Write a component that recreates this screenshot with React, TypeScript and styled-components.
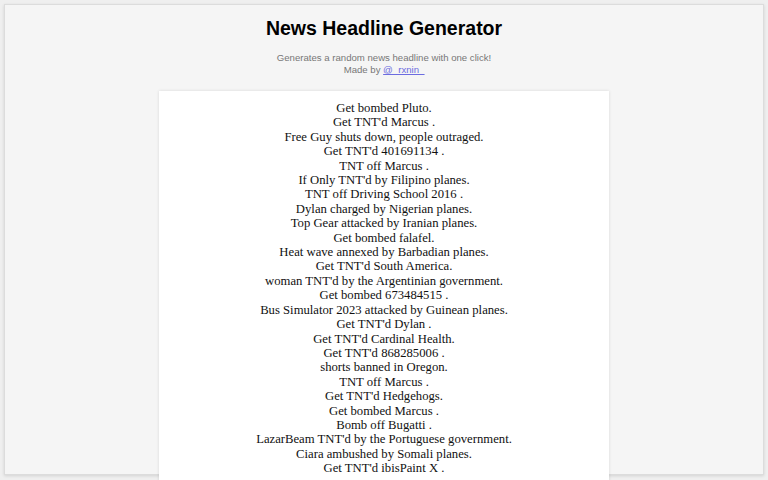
import styled, { createGlobalStyle } from "styled-components";

const GlobalStyle = createGlobalStyle`
  html, body {
    margin: 0;
    padding: 0;
    height: 100%;
    overflow: hidden;
    background: #efefef;
  }
`;

const Page = styled.div`
  margin: 4px;
  height: 469px;
  border: 1px solid #dcdcdc;
  background: #f5f5f5;
  box-shadow: 0 1px 3px rgba(0, 0, 0, 0.12);
  display: flex;
  flex-direction: column;
  align-items: center;
  font-family: "Liberation Sans", Arial, sans-serif;
`;

const Title = styled.h1`
  margin: 12px 0 0;
  font-size: 19.5px;
  line-height: 22px;
  font-weight: bold;
  color: #000;
`;

const Subtitle = styled.div`
  margin-top: 13px;
  font-size: 9.6px;
  line-height: 12px;
  color: #777;
  text-align: center;
`;

const Link = styled.a`
  color: #6c6ce0;
  text-decoration: underline;
`;

const Headlines = styled.div`
  margin-top: 15px;
  width: 450px;
  flex: 0 0 auto;
  min-height: 390px;
  padding: 10px 0 0;
  background: #fff;
  box-shadow: 0 0 3px rgba(0, 0, 0, 0.12);
  font-family: "Liberation Serif", "Times New Roman", serif;
  font-size: 12.7px;
  line-height: 14.4px;
  color: #111;
  text-align: center;
`;

const Headline = styled.div``;

const headlines = [
  "Get bombed Pluto.",
  "Get TNT'd Marcus .",
  "Free Guy shuts down, people outraged.",
  "Get TNT'd 401691134 .",
  "TNT off Marcus .",
  "If Only TNT'd by Filipino planes.",
  "TNT off Driving School 2016 .",
  "Dylan charged by Nigerian planes.",
  "Top Gear attacked by Iranian planes.",
  "Get bombed falafel.",
  "Heat wave annexed by Barbadian planes.",
  "Get TNT'd South America.",
  "woman TNT'd by the Argentinian government.",
  "Get bombed 673484515 .",
  "Bus Simulator 2023 attacked by Guinean planes.",
  "Get TNT'd Dylan .",
  "Get TNT'd Cardinal Health.",
  "Get TNT'd 868285006 .",
  "shorts banned in Oregon.",
  "TNT off Marcus .",
  "Get TNT'd Hedgehogs.",
  "Get bombed Marcus .",
  "Bomb off Bugatti .",
  "LazarBeam TNT'd by the Portuguese government.",
  "Ciara ambushed by Somali planes.",
  "Get TNT'd ibisPaint X .",
];

const App = () => {
  return (
    <>
      <GlobalStyle />
      <Page>
        <Title>News Headline Generator</Title>
        <Subtitle>
          Generates a random news headline with one click!
          <br />
          Made by <Link href="#">@_rxnin_</Link>
        </Subtitle>
        <Headlines>
          {headlines.map((line, key) => (
            <Headline key={key}>{line}</Headline>
          ))}
        </Headlines>
      </Page>
    </>
  );
};

export default App;
